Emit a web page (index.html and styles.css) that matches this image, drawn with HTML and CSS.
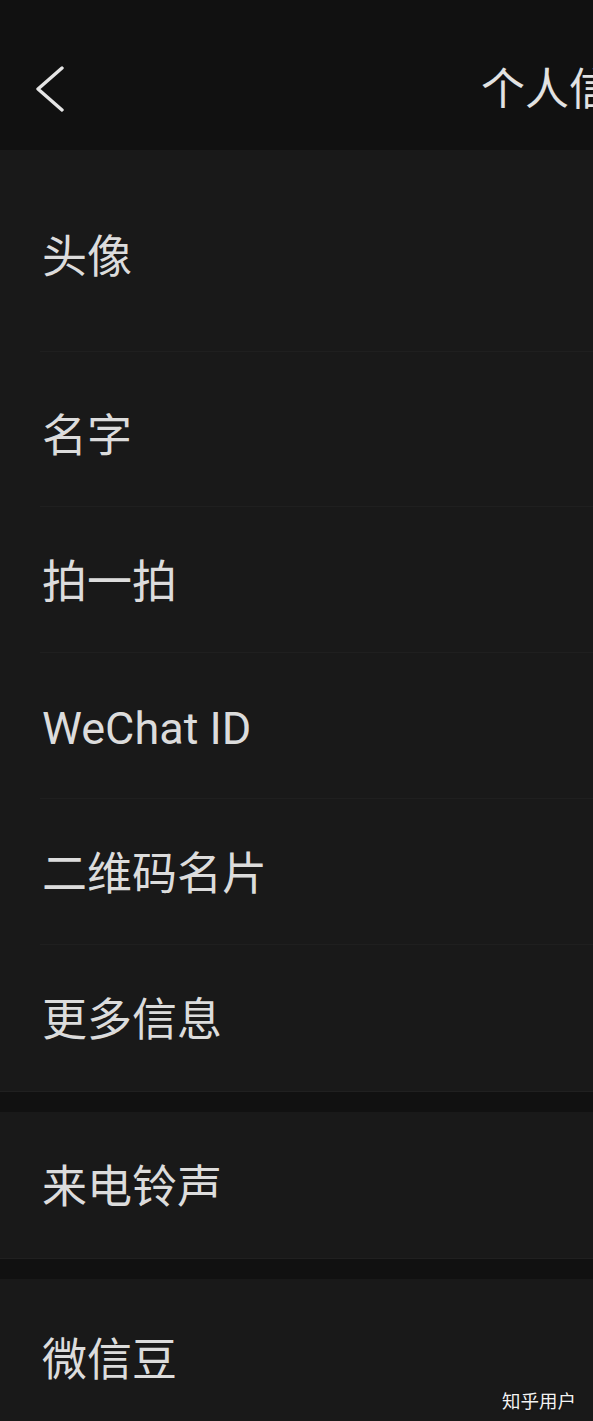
FILE: index.html
```html
<!DOCTYPE html>
<html lang="zh-CN">
<head>
  <meta charset="UTF-8" />
  <meta name="viewport" content="width=device-width, initial-scale=1.0">
  <title>个人信息</title>
  <link rel="stylesheet" href="styles.css">
</head>
<body>

  <!-- Шапка -->
  <div class="top-bar">
    <svg class="back" width="30" height="48" viewBox="0 0 30 48">
      <polyline points="26,3 2,24 26,45" fill="none" stroke="#e6e6e6" stroke-width="3.4" stroke-linecap="round" stroke-linejoin="round" />
    </svg>
    <div class="page-title">个人信息</div>
  </div>

  <div class="group">
    <div class="row row-avatar"><div class="row-body">头像</div></div>
    <div class="row row-name"><div class="row-body">名字</div></div>
    <div class="row"><div class="row-body">拍一拍</div></div>
    <div class="row"><div class="row-body">WeChat ID</div></div>
    <div class="row"><div class="row-body">二维码名片</div></div>
    <div class="row"><div class="row-body">更多信息</div></div>
  </div>

  <div class="group">
    <div class="row"><div class="row-body">来电铃声</div></div>
  </div>

  <div class="group">
    <div class="row row-beans"><div class="row-body">微信豆</div></div>
  </div>

  <div class="watermark">知乎用户</div>

</body>
</html>
```

FILE: styles.css
```css
body {
  font-family: Roboto, "Noto Sans CJK SC", sans-serif;
  background-color: #111111;
  margin: 0;
  padding: 0;
  width: 593px;
  height: 1421px;
  overflow: hidden;
  position: relative;
  white-space: nowrap;
}

.top-bar {
  height: 150px;
  box-sizing: border-box;
  padding-top: 30px;
  padding-left: 36px;
  display: flex;
  align-items: center;
  background-color: #111111;
}

.back {
  display: block;
  flex-shrink: 0;
  margin-top: -2px;
}

.page-title {
  margin-left: 415px;
  font-size: 44px;
  line-height: 1;
  color: #e2e2e2;
  flex-shrink: 0;
}

.group {
  background-color: #191919;
  border-bottom: 1px solid #202020;
  margin-bottom: 20px;
}

.row {
  height: 146px;
  padding-left: 40px;
  box-sizing: border-box;
}

.row-body {
  height: 100%;
  box-sizing: border-box;
  padding-left: 2px;
  padding-top: 5px;
  display: flex;
  align-items: center;
  font-size: 45px;
  line-height: 1;
  color: #dcdcdc;
  border-bottom: 1px solid #1f1f1f;
}

.row:last-child .row-body {
  border-bottom: none;
}

.row-avatar {
  height: 202px;
}

.row-avatar .row-body {
  padding-top: 14px;
}

.row-name {
  height: 155px;
}

.row-name .row-body {
  padding-top: 14px;
}

.row-beans .row-body {
  padding-top: 16px;
}

.watermark {
  position: absolute;
  right: 17px;
  bottom: 12px;
  font-family: "Noto Sans CJK SC", sans-serif;
  font-size: 18.5px;
  line-height: 1;
  color: #f2f2f2;
  text-shadow: 0 0 2px rgba(0, 0, 0, 0.6);
}
```
